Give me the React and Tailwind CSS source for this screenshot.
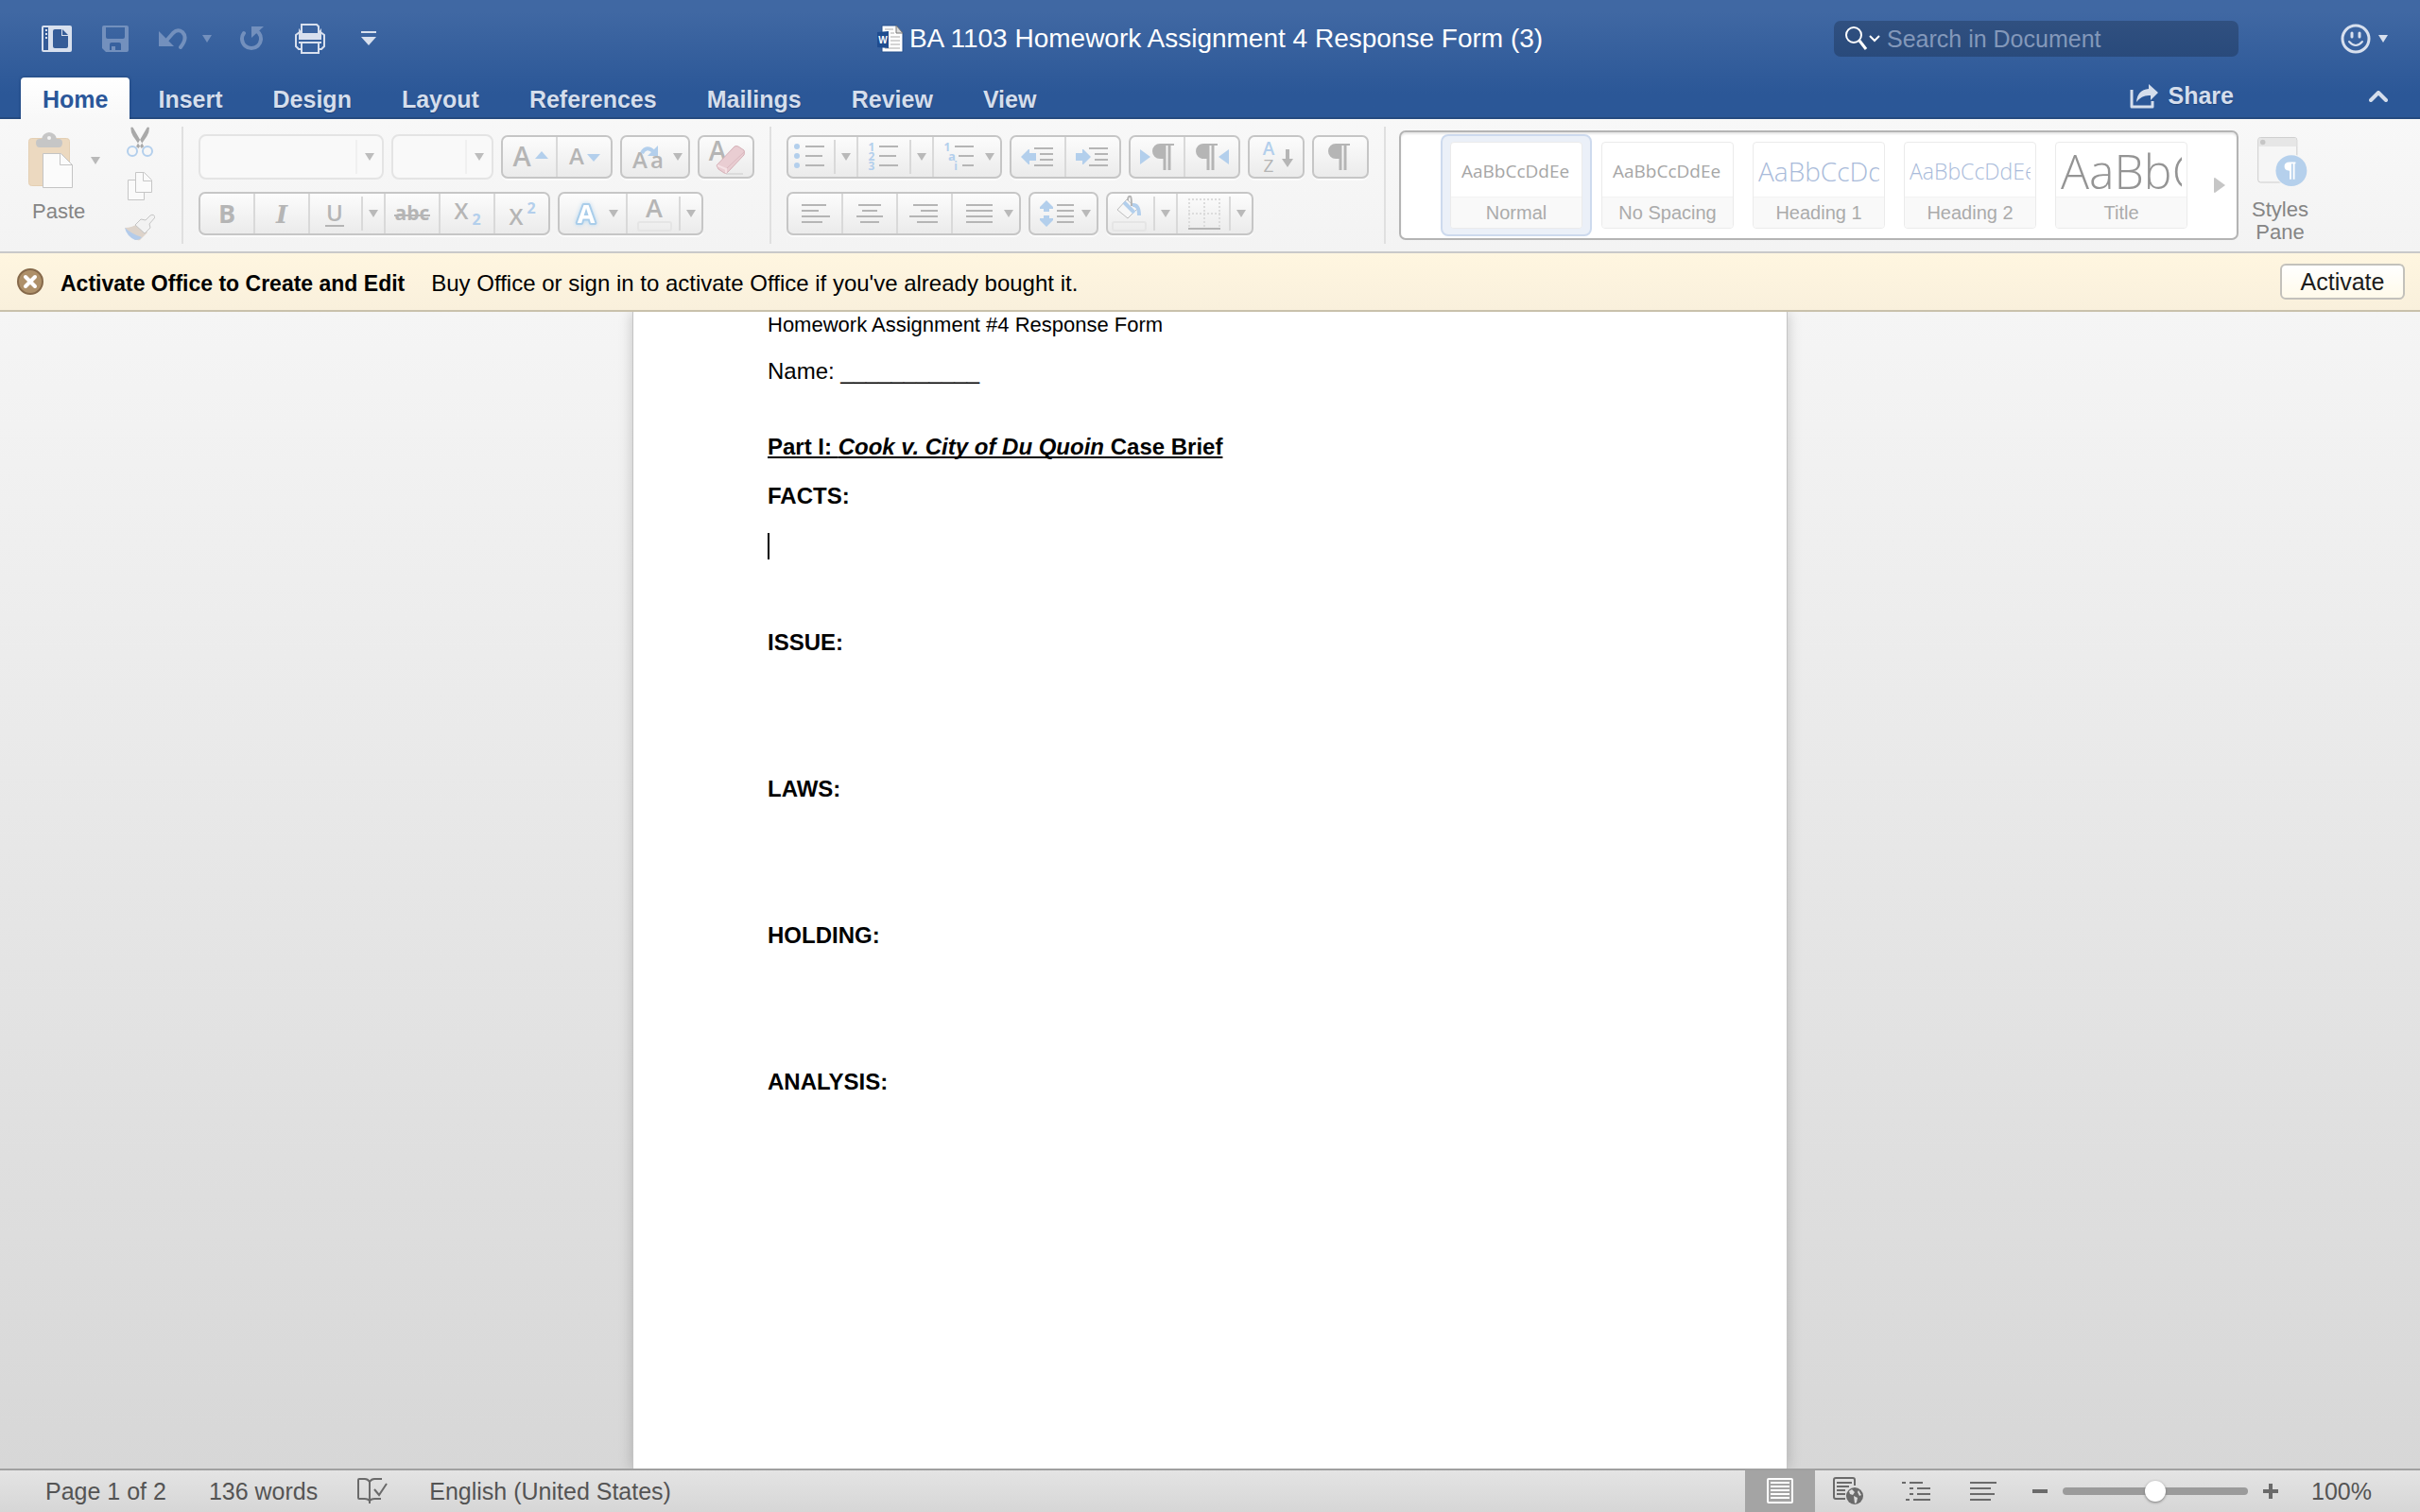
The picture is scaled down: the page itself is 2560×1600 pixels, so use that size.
import React, { useState } from "react";

const TABS = ["Home", "Insert", "Design", "Layout", "References", "Mailings", "Review", "View"];

const STYLES = [
  { name: "Normal", sample: "text-[19px] leading-[60px] text-[#a6a6a6] pl-[6px]" },
  { name: "No Spacing", sample: "text-[19px] leading-[60px] text-[#a6a6a6] pl-[6px]" },
  { name: "Heading 1", sample: "text-[28px] leading-[60px] font-light text-[#a9bbda]" },
  { name: "Heading 2", sample: "text-[23px] leading-[60px] font-light text-[#a9bbda]" },
  { name: "Title", sample: "text-[50px] leading-[60px] font-light text-[#949494]" },
];

const SECTIONS = ["FACTS:", "ISSUE:", "LAWS:", "HOLDING:", "ANALYSIS:"];

const GRAY = "#b5b5b5";
const BLUE = "#b3cfec";

/* ---------- ribbon primitives ---------- */

function Group({ children }) {
  return (
    <div className="flex h-[46px] rounded-[7px] border-2 border-[#c6c6c6] bg-linear-to-b from-[#fcfcfc] to-[#ebebeb] shadow-[0_2px_0_#fbfbfb] divide-x-2 divide-[#d9d9d9]">
      {children}
    </div>
  );
}

function Icon({ w = 56, children }) {
  return (
    <svg width={w} height="42" viewBox={`0 0 ${w} 42`} fill="none" aria-hidden="true">
      {children}
    </svg>
  );
}

function Tool({ label, w, children }) {
  return (
    <button type="button" aria-label={label} className="block">
      <Icon w={w}>{children}</Icon>
    </button>
  );
}

// Button with a separate drop-down part on its right
function SplitTool({ label, w, children }) {
  return (
    <div className="flex items-center">
      <Tool label={label} w={w}>{children}</Tool>
      <span className="w-[2px] h-9 bg-[#d9d9d9]" />
      <button type="button" aria-label={`${label} options`} className="block">
        <Icon w={22}><Caret x={6} /></Icon>
      </button>
    </div>
  );
}

function Caret({ x }) {
  return <path d={`M${x} 17h10l-5 8z`} fill="#b9b9b9" />;
}

function Letter({ x, y, size, weight = 600, fill = GRAY, children, ...rest }) {
  return (
    <text x={x} y={y} fontSize={size} fontWeight={weight} fill={fill} textAnchor="middle" fontFamily="Open Sans, Noto Sans, sans-serif" {...rest}>
      {children}
    </text>
  );
}

// rows: [x1, x2, y]
function Lines({ rows }) {
  return rows.map(([a, b, y]) => (
    <path key={y} d={`M${a} ${y}H${b}`} stroke={GRAY} strokeWidth="2" />
  ));
}

function Pilcrow({ x }) {
  return (
    <g transform={`translate(${x} 7)`} fill={GRAY}>
      <path d="M8 0H23V2H19.500V28H16.500V2H14.500V28H11.500V16H8A8 8 0 0 1 8 0z" />
    </g>
  );
}

function Divider() {
  return <div className="w-[2px] self-stretch bg-[#e0e0e0] shrink-0" />;
}

function Combo({ label, width }) {
  return (
    <div className={`relative h-12 -my-px rounded-[8px] border-2 border-[#e4e4e4] bg-[#f9f9f9] ${width}`}>
      <select aria-label={label} defaultValue="" className="w-full h-full appearance-none bg-transparent pl-3 text-[22px]">
        <option value=""></option>
      </select>
      <div className="absolute right-0 top-1 flex items-center pointer-events-none">
        <span className="w-[2px] h-9 bg-[#f0f0f0]" />
        <svg width="26" height="36" viewBox="0 0 26 36"><path d="M8 14h10l-5 8z" fill="#bdbdbd" /></svg>
      </div>
    </div>
  );
}

/* ---------- title bar ---------- */

function QuickAccess() {
  return (
    <div className="flex items-center gap-[30px] pl-11 text-[#d8e0ee]">
      <button type="button" aria-label="Gallery" className="w-[34px]">
        <svg width="32" height="28" viewBox="0 0 32 28">
          <rect width="32" height="28" rx="2" fill="currentColor" />
          <path d="M2 2h5v24H2z" fill="#355c98" />
          <path d="M4 4h2v2H4zM4 8h2v2H4zM4 12h2v2H4z" fill="currentColor" />
          <path d="M14 4h7v7h7v11q0 2-2 2H14q-2 0-2-2V6q0-2 2-2z" fill="#355c98" />
          <path d="M22 4l6 6h-6z" fill="#355c98" />
        </svg>
      </button>
      <button type="button" aria-label="Save" className="w-[30px] text-[#7390bd]">
        <svg width="28" height="28" viewBox="0 0 28 28" fill="currentColor" fillRule="evenodd">
          <path d="M2 0h24q2 0 2 2v24q0 2-2 2H4l-4-4V2q0-2 2-2zM4 2v10q0 2 2 2h16q2 0 2-2V2zM8 20v6h2v-4h4v4h6v-6q0-2-2-2h-8q-2 0-2 2z" />
        </svg>
      </button>
      <button type="button" aria-label="Undo" className="w-14 flex items-center gap-4 text-[#7390bd]">
        <svg width="30" height="22" viewBox="0 0 30 22">
          <path d="M0 3v16h16z" fill="currentColor" />
          <path d="M8 13l7-8q5-5 10-1 6 6-2 16" fill="none" stroke="currentColor" strokeWidth="4" strokeLinecap="round" />
        </svg>
        <svg width="10" height="8" viewBox="0 0 10 8"><path d="M0 0h10L5 8z" fill="currentColor" /></svg>
      </button>
      <button type="button" aria-label="Redo" className="w-[26px] text-[#7390bd]">
        <svg width="26" height="28" viewBox="0 0 26 28">
          <path d="M4 8A10 10 0 1 0 20 8L16 4" fill="none" stroke="currentColor" strokeWidth="4" strokeLinecap="round" />
          <path d="M12 1h13L12 13z" fill="currentColor" />
        </svg>
      </button>
      <button type="button" aria-label="Print" className="w-[34px] flex justify-end">
        <svg width="32" height="32" viewBox="0 0 32 32" fill="none" stroke="currentColor" strokeWidth="2">
          <path d="M7 11V1h16l2 2v8" />
          <path d="M5 8v8h22V8l-2 3H7z" fill="currentColor" />
          <path d="M5 9L1 12v12l3 3h3M27 9l4 3v12l-3 3h-3" />
          <path d="M7 20h18v11H7zM4 20h24" />
        </svg>
      </button>
      <button type="button" aria-label="Customize toolbar" className="w-8 flex justify-center">
        <svg width="16" height="16" viewBox="0 0 16 16" fill="currentColor"><path d="M0 0h16v2H0zM0 6h16l-8 9z" /></svg>
      </button>
    </div>
  );
}

function TitleBar() {
  return (
    <div className="grid grid-cols-[1fr_auto_1fr] items-center h-[82px]">
      <QuickAccess />
      <div className="flex items-center gap-[6px]">
        <svg width="28" height="30" viewBox="0 0 28 30">
          <path d="M5 1h15l7 8v20H5z" fill="#fff" stroke="#27508c" />
          <path d="M20 1v8h7z" fill="#dcdcdc" stroke="#777" />
          <path d="M8 5h9M14 9h4M14 13h10M14 17h10M14 21h10M8 25h16" stroke="#a9a9a9" strokeWidth="1" />
          <path d="M0 8l12-1v18l-12-1z" fill="#1f4c8f" />
          <text x="6" y="20" fontSize="10" fontWeight="700" fill="#fff" textAnchor="middle" fontFamily="Liberation Sans">W</text>
        </svg>
        <h1 className="text-[28px] leading-8 text-white">BA 1103 Homework Assignment 4 Response Form (3)</h1>
      </div>
      <div className="flex items-center justify-end gap-[108px] pr-[34px]">
        <label className="flex items-center w-[428px] h-[38px] rounded-[7px] bg-linear-to-b from-[#305080] to-[#294a7b] pl-3">
          <svg width="38" height="28" viewBox="0 0 38 28" fill="none" stroke="#fff" strokeWidth="2">
            <circle cx="9" cy="10" r="8" />
            <path d="M15 16l7 9" strokeWidth="3" />
            <path d="M26 11l5 5 5-5" />
          </svg>
          <input type="text" aria-label="Search in Document" placeholder="Search in Document" className="ml-[6px] flex-1 min-w-0 bg-transparent outline-none text-[25px] leading-8 text-white placeholder:text-[#8398ba]" />
        </label>
        <button type="button" aria-label="Feedback" className="flex items-center gap-2 text-[#d8e0ee]">
          <svg width="32" height="32" viewBox="0 0 32 32" fill="none" stroke="currentColor" strokeWidth="3" strokeLinecap="round">
            <circle cx="16" cy="16" r="14" />
            <path d="M12 10v4M20 10v4" />
            <path d="M9 19q7 8 14 0" strokeWidth="2" />
          </svg>
          <svg width="10" height="8" viewBox="0 0 10 8"><path d="M0 0h10L5 8z" fill="currentColor" /></svg>
        </button>
      </div>
    </div>
  );
}

function TabBar() {
  const [active, setActive] = useState("Home");
  return (
    <div className="flex items-start justify-between pl-[22px] pr-[34px] h-[42px] text-[25px] font-bold text-[#d5deec]">
      <nav className="flex gap-[7px]">
        {TABS.map((t) => (
          <button
            key={t}
            type="button"
            onClick={() => setActive(t)}
            className={`h-11 px-[23px] pt-[3px] rounded-t-[4px] ${active === t ? "bg-linear-to-b from-white to-[#f8f8f8] text-[#2b579a] shadow-[0_0_3px_#1c3d6e]" : "[text-shadow:0_1px_1px_#1f4177]"}`}
          >
            {t}
          </button>
        ))}
      </nav>
      <div className="flex items-center gap-[143px] h-10">
        <button type="button" className="flex items-center gap-[11px] [text-shadow:0_1px_1px_#1f4177]">
          <svg width="30" height="26" viewBox="0 0 30 26">
            <path d="M2 6v18h22v-6" fill="none" stroke="currentColor" strokeWidth="3" strokeLinejoin="round" />
            <path d="M20 0l10 9-8 8v-5Q13 11 7 19 8 6 20 5z" fill="currentColor" />
          </svg>
          Share
        </button>
        <button type="button" aria-label="Collapse ribbon">
          <svg width="20" height="12" viewBox="0 0 20 12" fill="none" stroke="currentColor" strokeWidth="4" strokeLinecap="round" strokeLinejoin="round"><path d="M2 10l8-8 8 8" /></svg>
        </button>
      </div>
    </div>
  );
}

/* ---------- ribbon ---------- */

function Clipboard() {
  return (
    <div className="self-stretch flex gap-6 pl-[30px] pr-[28px]">
      <button type="button" className="w-[78px] flex flex-col items-start pt-[6px]">
        <span className="flex items-center gap-[18px]">
          <svg width="48" height="60" viewBox="0 0 48 60">
            <rect x="0.500" y="6.500" width="43" height="50" rx="3" fill="#ecd9c0" stroke="#e4cfb3" />
            <path d="M8 11q0-4 4-4h2q1-6 8-7 7 1 8 7h2q4 0 4 4 0 5-4 5H12q-4 0-4-5z" fill="#c6c6c6" />
            <circle cx="22" cy="6" r="2" fill="#f4f4f4" />
            <path d="M15.500 22.500h19l12 12v24h-31z" fill="#fbfbfb" stroke="#c4c4c4" />
            <path d="M33.500 22.500v12h13" fill="none" stroke="#c4c4c4" />
          </svg>
          <svg width="10" height="8" viewBox="0 0 10 8"><path d="M0 0h10L5 8z" fill="#b9b9b9" /></svg>
        </span>
        <span className="ml-1 mt-3 text-[22px] leading-6 text-[#858585]">Paste</span>
      </button>
      <div className="flex flex-col items-center justify-between w-8 pb-[2px]">
        <button type="button" aria-label="Cut">
          <svg width="32" height="34" viewBox="0 0 32 34" fill="none">
            <path d="M4 1q2-1 3 0L21 21l-3 2L7 10Q4 6 4 1zM28 1q-2-1-3 0L11 21l3 2 11-13q3-4 3-9z" transform="translate(3 0) scale(0.820 1)" fill="#a9a9a9" />
            <circle cx="8" cy="26" r="5" stroke={BLUE} strokeWidth="2" />
            <circle cx="24" cy="26" r="5" stroke={BLUE} strokeWidth="2" />
          </svg>
        </button>
        <button type="button" aria-label="Copy">
          <svg width="32" height="30" viewBox="0 0 32 30" fill="#fafafa" stroke="#c6c6c6">
            <path d="M3.500 8.500h17v21h-17z" />
            <path d="M11.500 0.500h9l8 8v13h-17z" />
            <path d="M19.500 0.500v9h9" />
          </svg>
        </button>
        <button type="button" aria-label="Format Painter">
          <svg width="32" height="30" viewBox="0 0 32 30">
            <path d="M0 15q8 0 15-5l9 10-8 8q-8 2-16-13z" fill="#ddd3ca" />
            <path d="M0 15q2 9 11 13 5 0 7-3Q8 22 0 15z" fill="#b3cbea" />
            <path d="M11 12l6-6 5 1 5-5q4-2 5 2l-6 7 1 4-6 6z" fill="#f2f2f2" stroke="#c4c4c4" />
          </svg>
        </button>
      </div>
    </div>
  );
}

function FontTools() {
  return (
    <div className="flex flex-col gap-[14px] px-4">
      <div className="flex gap-2">
        <Combo label="Font" width="w-[196px]" />
        <Combo label="Font size" width="w-[108px]" />
        <Group>
          <Tool label="Grow font"><Letter x={20} y={31} size={29}>A</Letter><path d="M34 23h14l-7-8z" fill={BLUE} /></Tool>
          <Tool label="Shrink font"><Letter x={20} y={29} size={24}>A</Letter><path d="M31 18h14l-7 8z" fill={BLUE} /></Tool>
        </Group>
        <Group>
          <Tool label="Change case" w={70}>
            <Letter x={19} y={33} size={24}>A</Letter>
            <Letter x={37} y={33} size={24}>a</Letter>
            <path d="M21 17q5-9 13-1" stroke={BLUE} strokeWidth="4" />
            <path d="M38 9v11H27z" fill={BLUE} />
            <Caret x={54} />
          </Tool>
        </Group>
        <Group>
          <Tool label="Clear formatting">
            <Letter x={19} y={25} size={28}>A</Letter>
            <path d="M28 39h18" stroke="#dcdcdc" strokeWidth="2" />
            <path d="M18 30l19-20q2-1 4 0l6 4q1 2 0 5L30 37q-2 2-4 1l-6-4z" fill="#e9cdd2" stroke="#d5b0b7" />
            <path d="M19 30l9 4v4" stroke="#f5e2e5" strokeWidth="2" />
            <path d="M29 33l18-17" stroke="#dbb9c0" />
          </Tool>
        </Group>
      </div>
      <div className="flex gap-2">
        <Group>
          <Tool label="Bold"><Letter x={28} y={31} size={27} weight={700}>B</Letter></Tool>
          <Tool label="Italic">
            <text x="28" y="31" fontSize="26" fontWeight="700" fontStyle="italic" fill={GRAY} textAnchor="middle" fontFamily="DejaVu Serif, serif">I</text>
          </Tool>
          <SplitTool label="Underline" w={54}>
            <Letter x={26} y={29} size={24}>U</Letter>
            <path d="M16 34h20" stroke={GRAY} strokeWidth="2" />
          </SplitTool>
          <Tool label="Strikethrough">
            <Letter x={28} y={28} size={21} weight={700}>abc</Letter>
            <path d="M9 23h38" stroke={GRAY} strokeWidth="2" />
          </Tool>
          <Tool label="Subscript">
            <Letter x={22} y={27} size={24}>X</Letter>
            <Letter x={38} y={33} size={16} weight={700} fill={BLUE}>2</Letter>
          </Tool>
          <Tool label="Superscript">
            <Letter x={22} y={33} size={24}>X</Letter>
            <Letter x={38} y={21} size={16} weight={700} fill={BLUE}>2</Letter>
          </Tool>
        </Group>
        <Group>
          <Tool label="Text effects" w={70}>
            <Letter x={28} y={31} size={27} weight={700} fill="#fff" stroke="#a9cdea" strokeWidth="4" strokeLinejoin="round" paintOrder="stroke" className="drop-shadow-[0_0_2px_#b9d9f1]">A</Letter>
            <Caret x={52} />
          </Tool>
          <SplitTool label="Font color" w={54}>
            <Letter x={28} y={25} size={27}>A</Letter>
            <rect x="11" y="30" width="35" height="9" rx="2" stroke="#e5e5e5" strokeWidth="2" />
          </SplitTool>
        </Group>
      </div>
    </div>
  );
}

function ParagraphTools() {
  return (
    <div className="flex flex-col gap-[14px] px-4">
      <div className="flex gap-2">
        <Group>
          <SplitTool label="Bullets" w={48}>
            <g fill={BLUE}><circle cx="9" cy="10" r="3" /><circle cx="9" cy="20" r="3" /><circle cx="9" cy="30" r="3" /></g>
            <Lines rows={[[18, 38, 10], [18, 36, 20], [18, 38, 30]]} />
          </SplitTool>
          <SplitTool label="Numbering" w={54}>
            <Letter x={14} y={15} size={12} weight={700} fill={BLUE}>1</Letter>
            <Letter x={14} y={25} size={12} weight={700} fill={BLUE}>2</Letter>
            <Letter x={14} y={35} size={12} weight={700} fill={BLUE}>3</Letter>
            <Lines rows={[[22, 42, 10], [22, 40, 20], [22, 42, 30]]} />
          </SplitTool>
          <Tool label="Multilevel list" w={70}>
            <Letter x={14} y={15} size={12} weight={700} fill={BLUE}>1</Letter>
            <Letter x={19} y={25} size={13} weight={700} fill={BLUE}>a</Letter>
            <Letter x={23} y={35} size={12} weight={700} fill={BLUE}>i</Letter>
            <Lines rows={[[22, 42, 10], [26, 42, 20], [30, 42, 30]]} />
            <Caret x={54} />
          </Tool>
        </Group>
        <Group>
          <Tool label="Decrease indent">
            <path d="M10 21l8-8h1v4h7v8h-7v4h-1z" fill={BLUE} />
            <Lines rows={[[24, 44, 12], [30, 44, 18], [30, 44, 24], [24, 44, 30]]} />
          </Tool>
          <Tool label="Increase indent">
            <path d="M26 21l-8-8h-1v4h-7v8h7v4h1z" fill={BLUE} />
            <Lines rows={[[24, 44, 12], [30, 44, 18], [30, 44, 24], [24, 44, 30]]} />
          </Tool>
        </Group>
        <Group>
          <Tool label="Left to right"><path d="M10 13l11 8-11 8z" fill={BLUE} /><Pilcrow x={23} /></Tool>
          <Tool label="Right to left"><Pilcrow x={11} /><path d="M46 13l-11 8 11 8z" fill={BLUE} /></Tool>
        </Group>
        <Group>
          <Tool label="Sort">
            <Letter x={20} y={19} size={19} fill={BLUE}>A</Letter>
            <Letter x={20} y={37} size={19} weight={400}>Z</Letter>
            <path d="M38 13h4v10h4l-6 9-6-9h4z" fill={GRAY} />
          </Tool>
        </Group>
        <Group>
          <Tool label="Show formatting marks"><Pilcrow x={15} /></Tool>
        </Group>
      </div>
      <div className="flex gap-2">
        <Group>
          <Tool label="Align left"><Lines rows={[[14, 40, 12], [14, 32, 18], [14, 44, 24], [14, 36, 30]]} /></Tool>
          <Tool label="Center"><Lines rows={[[16, 40, 12], [20, 36, 18], [14, 42, 24], [18, 38, 30]]} /></Tool>
          <Tool label="Align right"><Lines rows={[[16, 42, 12], [24, 42, 18], [12, 42, 24], [20, 42, 30]]} /></Tool>
          <Tool label="Justify" w={70}>
            <Lines rows={[[14, 42, 12], [14, 42, 18], [14, 42, 24], [14, 42, 30]]} />
            <Caret x={54} />
          </Tool>
        </Group>
        <Group>
          <Tool label="Line spacing" w={70}>
            <path d="M17 7l7 7v2h-4v3h-6v-3h-4v-2zM17 35l7-7v-2h-4v-3h-6v3h-4v2z" fill={BLUE} />
            <Lines rows={[[28, 46, 12], [28, 46, 18], [28, 46, 24], [28, 46, 30]]} />
            <Caret x={54} />
          </Tool>
        </Group>
        <Group>
          <SplitTool label="Shading" w={48}>
            <path d="M20 6l11 10-10 10-11-9z" fill="#f7f7f7" stroke="#bdbdbd" />
            <path d="M17 9l11 11" stroke={BLUE} strokeWidth="4" />
            <path d="M26 12q7-1 7 11" stroke={BLUE} strokeWidth="4" />
            <path d="M21 7q0-5 3-4 1 1 1 10" stroke={GRAY} strokeWidth="2" />
            <rect x="5" y="30" width="35" height="9" rx="2" stroke="#e5e5e5" strokeWidth="2" />
          </SplitTool>
          <SplitTool label="Borders" w={54}>
            <path d="M11 6h34M11 21h34M12 5v30M28 5v30M44 5v30" stroke="#dcdcdc" strokeWidth="2" strokeDasharray="2 2" />
            <path d="M11 37h34" stroke={GRAY} strokeWidth="2" />
          </SplitTool>
        </Group>
      </div>
    </div>
  );
}

function StyleGallery() {
  return (
    <div className="flex items-center h-[116px] ml-[14px] pl-[42px] rounded-[7px] border-2 border-[#b4b4b4] bg-white shadow-[inset_0_2px_2px_#e8e8e8]">
      {STYLES.map((s, i) => (
        <button
          key={s.name}
          type="button"
          className={`w-40 h-[108px] px-2 pt-[6px] pb-[6px] rounded-[8px] border-2 ${i === 0 ? "bg-[#ebf0f8] border-[#cddaee]" : "border-transparent"}`}
        >
          <span className="flex flex-col h-full rounded-[4px] border border-[#ebebeb] bg-white overflow-hidden">
            <span className={`block h-[61px] mx-[5px] overflow-hidden whitespace-nowrap text-left font-['Open_Sans',sans-serif] ${s.sample}`}>
              {s.name === "Title" ? "AaBbCc" : "AaBbCcDdEe"}
            </span>
            <span className="block flex-1 border-t border-[#f2f2f2] bg-[#f9f9f9] text-center text-[20px] leading-8 text-[#ababab]">{s.name}</span>
          </span>
        </button>
      ))}
      <button type="button" aria-label="More styles" className="pl-[18px] pr-3">
        <svg width="12" height="16" viewBox="0 0 12 16"><path d="M0 1q0-1 1-1l11 8-11 8q-1 0-1-1z" fill="#c6c6c6" /></svg>
      </button>
    </div>
  );
}

function Ribbon() {
  return (
    <div className="flex items-center h-[142px] py-2 border-b-2 border-[#c9c9c9] bg-linear-to-b from-[#f8f8f8] to-[#f3f3f3]">
      <Clipboard />
      <Divider />
      <FontTools />
      <Divider />
      <ParagraphTools />
      <Divider />
      <StyleGallery />
      <button type="button" className="ml-3 self-stretch flex flex-col items-center justify-start pt-[11px] text-[22px] leading-6 text-[#858585]">
        <svg width="64" height="58" viewBox="-5 0 64 58" fill="none">
          <rect x="1.500" y="0.500" width="45" height="52" rx="3" fill="#f6f6f6" stroke="#c9c9c9" />
          <path d="M2 3q0-2 2-2h40q2 0 2 2v8H2z" fill="#e6e6e6" />
          <circle cx="7" cy="6" r="3" fill="#c6c6c6" />
          <circle cx="40" cy="39" r="19" fill="#f6f6f6" />
          <circle cx="40" cy="39" r="18" fill="#b5d0ec" />
          <path d="M38 29h7v2h-1v18h-2V31h-2v18h-2v-10q-6 0-6-5t6-5z" fill="#fff" />
        </svg>
        <span className="mt-3">Styles<br />Pane</span>
      </button>
    </div>
  );
}

function ActivationBar() {
  return (
    <div className="flex items-center h-[62px] pl-[18px] pr-4 border-b-2 border-[#c9c1ab] bg-linear-to-b from-[#fff6e0] to-[#f9f0dc] text-[24px] leading-7 text-black">
      <button type="button" aria-label="Dismiss">
        <svg width="28" height="28" viewBox="0 0 28 28">
          <circle cx="14" cy="14" r="13" fill="#ae9069" stroke="#86694a" strokeWidth="2" />
          <path d="M9 9l10 10M19 9L9 19" stroke="#fff" strokeWidth="4" strokeLinecap="round" />
        </svg>
      </button>
      <p className="flex items-baseline gap-7 ml-[18px] pt-[3px]">
        <strong className="text-[23px] font-bold">Activate Office to Create and Edit</strong>
        <span>Buy Office or sign in to activate Office if you've already bought it.</span>
      </p>
      <button type="button" className="ml-auto w-[132px] h-[38px] rounded-[6px] border-2 border-[#c3c1bb] bg-linear-to-b from-white to-[#fffaea] text-[25px] text-[#1c1c1c]">Activate</button>
    </div>
  );
}

/* ---------- document ---------- */

function DocumentArea() {
  return (
    <main className="flex-1 min-h-0 flex justify-center overflow-hidden bg-linear-to-b from-[#f5f5f5] to-[#d7d7d7]">
      <article className="w-[1222px] px-[142px] border-x border-[#c4c4c4] bg-white shadow-[0_0_14px_rgba(0,0,0,0.2)] text-[24px] leading-7 text-black">
        <p className="text-[22px]">Homework Assignment #4 Response Form</p>
        <p className="mt-[21px]">Name: ___________</p>
        <h2 className="mt-[52px] font-bold underline underline-offset-2 decoration-2 [text-decoration-skip-ink:none]">
          Part I: <em>Cook v. City of Du Quoin</em> Case Brief
        </h2>
        <div className="mt-6">
          {SECTIONS.map((s, i) => (
            <section key={s} className="h-[155px]">
              <h3 className="font-bold">{s}</h3>
              {i === 0 && <div className="mt-[25px] w-[2px] h-7 bg-black" />}
            </section>
          ))}
        </div>
      </article>
    </main>
  );
}

function StatusBar() {
  const [zoom, setZoom] = useState(100);
  return (
    <footer className="flex items-center h-[46px] pl-12 pr-[51px] border-t-2 border-[#a0a0a0] bg-linear-to-b from-[#e4e4e4] to-[#d6d6d6] text-[25px] leading-8 text-[#545454]">
      <span>Page 1 of 2</span>
      <span className="ml-[45px]">136 words</span>
      <button type="button" aria-label="Spelling and grammar" className="ml-[42px]">
        <svg width="32" height="28" viewBox="0 0 32 28" fill="none" stroke="#6a6a6a" strokeWidth="2">
          <path d="M13 4q-2-3-5-3H2q-1 0-1 1v19q0 1 1 1h6q3 0 5 2 2-2 5-2h7M13 27V4q2-3 5-3h8" />
          <path d="M18 12l5 6 8-12" />
        </svg>
      </button>
      <button type="button" className="ml-11">English (United States)</button>
      <div className="ml-auto flex items-center self-stretch">
        <button type="button" aria-label="Print layout" className="w-[74px] self-stretch flex items-center justify-center bg-[#a4a4a4]">
          <svg width="28" height="28" viewBox="0 0 28 28" fill="none" stroke="#fff" strokeWidth="2">
            <rect x="1" y="1" width="26" height="25" rx="1" />
            <path d="M4 5h20M4 9h20M4 13h20M4 17h20M4 21h20" />
          </svg>
        </button>
        <button type="button" aria-label="Web layout" className="ml-[19px]">
          <svg width="32" height="30" viewBox="0 0 32 30" fill="none" stroke="#6a6a6a" strokeWidth="2">
            <path d="M13 23H3q-2 0-2-2V3q0-2 2-2h18q2 0 2 2v6" />
            <path d="M4 6h16M4 10h13M4 14h9M4 18h9" />
            <circle cx="23" cy="20" r="9" fill="#6a6a6a" stroke="none" />
            <path d="M17 15l3-2 3 3-2 3-3-1zM22 20l4 2-1 5-2 1zM27 14l3 5-2 1-2-4z" fill="#dcdcdc" stroke="none" />
          </svg>
        </button>
        <button type="button" aria-label="Outline" className="ml-[41px]">
          <svg width="30" height="22" viewBox="0 0 30 22" stroke="#6a6a6a" strokeWidth="2">
            <path d="M0 2h4M8 2h14M8 8h4M16 8h14M8 14h4M16 14h14M4 20h4M12 20h18" />
          </svg>
        </button>
        <button type="button" aria-label="Draft" className="ml-[42px]">
          <svg width="28" height="22" viewBox="0 0 28 22" stroke="#6a6a6a" strokeWidth="2">
            <path d="M0 2h28M0 8h22M0 14h26M0 20h22" />
          </svg>
        </button>
        <button type="button" aria-label="Zoom out" onClick={() => setZoom(zoom - 10)} className="ml-[38px]">
          <svg width="16" height="16" viewBox="0 0 16 16" stroke="#6a6a6a" strokeWidth="4"><path d="M0 8h16" /></svg>
        </button>
        <input
          type="range"
          aria-label="Zoom"
          min="10"
          max="190"
          value={zoom}
          onChange={(e) => setZoom(Number(e.target.value))}
          className="ml-4 w-[196px] h-2 appearance-none rounded-full bg-[#9b9b9b] [&::-webkit-slider-thumb]:appearance-none [&::-webkit-slider-thumb]:size-[22px] [&::-webkit-slider-thumb]:rounded-full [&::-webkit-slider-thumb]:bg-white [&::-webkit-slider-thumb]:shadow-[0_1px_3px_#777]"
        />
        <button type="button" aria-label="Zoom in" onClick={() => setZoom(zoom + 10)} className="ml-4">
          <svg width="16" height="16" viewBox="0 0 16 16" stroke="#6a6a6a" strokeWidth="4"><path d="M0 8h16M8 0v16" /></svg>
        </button>
        <span className="ml-[35px]">{zoom}%</span>
      </div>
    </footer>
  );
}

export default function App() {
  return (
    <div className="h-screen flex flex-col overflow-hidden font-['Liberation_Sans',Arial,sans-serif]">
      <header className="h-[126px] border-b-2 border-[#254a80] bg-linear-to-b from-[#4068a3] from-10% to-[#2b5797] to-80%">
        <TitleBar />
        <TabBar />
      </header>
      <Ribbon />
      <ActivationBar />
      <DocumentArea />
      <StatusBar />
    </div>
  );
}
